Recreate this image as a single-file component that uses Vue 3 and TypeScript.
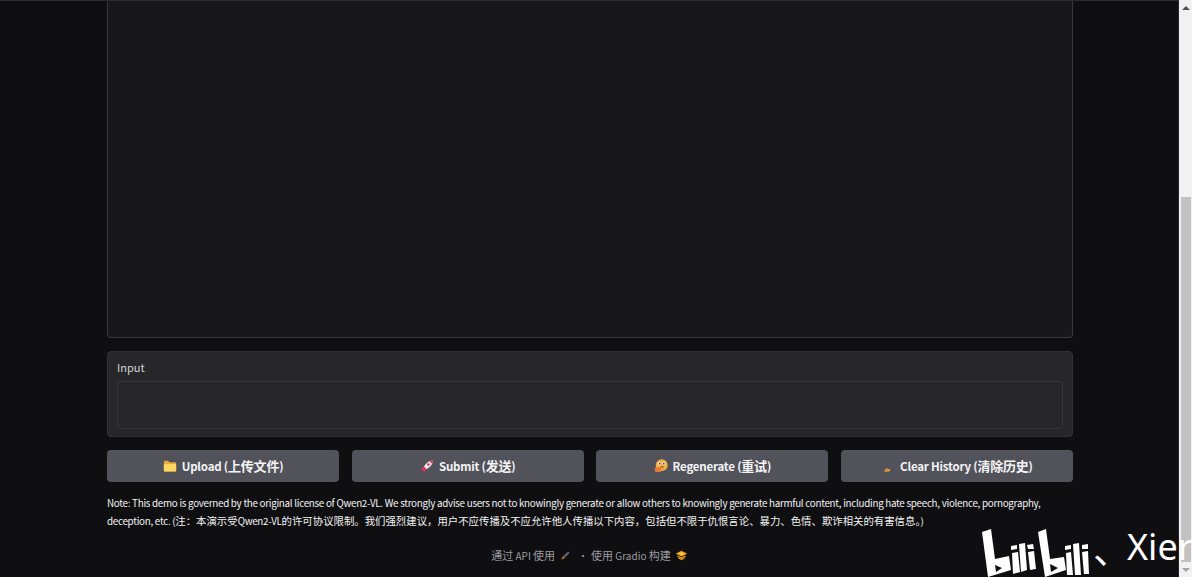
<template>
  <div class="page">
    <main class="main">
      <div class="container">
        <div class="chatbot"></div>
        <div class="input-block">
          <label class="input-label" for="query">Input</label>
          <textarea id="query" class="input-box" rows="2"></textarea>
        </div>
        <div class="btn-row">
          <button v-for="b in buttons" :key="b.en" class="btn" type="button">
            <svg v-if="b.icon === 'folder'" class="btn-icon" viewBox="0 0 16 16">
              <path d="M1 3.500C1 2.700 1.600 2 2.400 2h3.400l1.600 1.800h6.200c.8 0 1.400.6 1.400 1.400V13c0 .8-.6 1.400-1.400 1.400H2.400C1.600 14.400 1 13.800 1 13z" fill="#e8a93a" />
              <path d="M1 5.600h14V13c0 .8-.6 1.400-1.400 1.400H2.400C1.600 14.400 1 13.800 1 13z" fill="#fdd663" />
            </svg>
            <svg v-else-if="b.icon === 'rocket'" class="btn-icon" viewBox="0 0 16 16">
              <path d="M1 11 5 8l3 3-3 4-1-1.800-1.200 1-.8-.8 1-1.200z" fill="#d9365e" />
              <path d="M4.600 8.600C6.600 4.800 9.600 2 15 1 14.400 6.400 11.200 9.400 7.400 11.400z" fill="#f0e9ee" />
              <path d="M10.600 2.300C12 1.700 13.400 1.300 15 1c-.2 1.600-.6 3-1.200 4.300z" fill="#d9365e" />
              <circle cx="9.600" cy="6.400" r="1.500" fill="#c9455f" />
            </svg>
            <svg v-else-if="b.icon === 'think'" class="btn-icon" viewBox="0 0 16 16">
              <circle cx="8.800" cy="7" r="6.800" fill="#f4b042" />
              <circle cx="6.400" cy="5.200" r="1.800" fill="#fff" />
              <circle cx="11.400" cy="5.200" r="1.800" fill="#fff" />
              <circle cx="6.600" cy="5.300" r="1" fill="#4a3520" />
              <circle cx="11.200" cy="5.300" r="1" fill="#4a3520" />
              <path d="M7 9.600c1.300-.8 2.900-.8 4.300 0" stroke="#8a4b20" stroke-width="1.200" fill="none" />
              <path d="M.8 11.500c0-1.800 1.600-2.500 3-2l4.200 1.200c1.400.4 1.200 1.800 0 1.800H6.600l1.200 1c.6.7-.1 1.700-1 1.400H3c-1.400 0-2.200-1.200-2.200-2.400z" fill="#e8793a" />
            </svg>
            <svg v-else class="btn-icon" viewBox="0 0 16 16">
              <path d="M3.500 14.500c.2-1.800 1.500-3.700 3.400-4.300l3 2.300c-.8 1.200-1.600 1.800-2.600 2z" fill="#e8893a" />
              <path d="M7.800 14.500c1.200-.3 2.400-1 3-2.100l-.9-.8-1.400 1.300z" fill="#f6c04a" />
              <path d="M9.500 10.500 14 6" stroke="#5f5f68" stroke-width="1" />
            </svg>
            <span class="btn-text">{{ b.en }} (<span class="btn-zh">{{ b.zh }}</span>)</span>
          </button>
        </div>
        <p class="note">Note: This demo is governed by the original license of Qwen2-VL. We strongly advise users not to knowingly generate or allow others to knowingly generate harmful content, including hate speech, violence, pornography, deception, etc. (<span class="zh">注：本演示受</span>Qwen2-VL<span class="zh">的许可协议限制。我们强烈建议，用户不应传播及不应允许他人传播以下内容，包括但不限于仇恨言论、暴力、色情、欺诈相关的有害信息。</span>)</p>
      </div>
      <footer class="footer">
        <span><span class="foot-zh">通过</span> API <span class="foot-zh">使用</span></span>
        <svg class="foot-icon" viewBox="0 0 12 12">
          <path d="M1.500 10.500 3.500 6.500 5.500 8.500z" fill="#f08a24" />
          <path d="M4 6 8 2.500 10.500 1.500 9.500 4 6 8z" fill="#5d6480" />
        </svg>
        <span class="dot">·</span>
        <span><span class="foot-zh">使用</span> Gradio <span class="foot-zh">构建</span></span>
        <svg class="foot-icon" viewBox="0 0 12 12">
          <path d="M6 1.500 11 4 6 6.500 1 4z" fill="#f9c74f" stroke="#f59e0b" stroke-width="1.200" />
          <path d="M1.500 6.500 6 8.800 10.500 6.500" fill="none" stroke="#f59e0b" stroke-width="1.200" />
          <path d="M2.500 8.500 6 10.400 9.500 8.500" fill="none" stroke="#f59e0b" stroke-width="1.200" />
        </svg>
      </footer>
    </main>
    <div class="scrollbar">
      <div class="arrow up"></div>
      <div class="track"><div class="thumb"></div></div>
      <div class="arrow down"></div>
    </div>
    <div class="watermark">
      <svg class="bili" viewBox="0 0 118 55" fill="#fff">
        <path d="M7 10 16 7 20 37 34 34 36 48 13 55z" />
        <path d="M20 43 27 46 21 50z" fill="#0f0f11" />
        <path d="M36 24 42 23 42 27 36 28zM37 31 43 30 45 50 38 52zM44 22 50 21 52 48 46 50zM52 23 58 22 59 27 53 27zM53 30 59 29 61 47 55 48z" />
        <path d="M63 10 71 7 75 37 89 35 91 48 70 55z" />
        <path d="M75 42 83 46 76 50z" fill="#0f0f11" />
        <path d="M90 24 96 23 96 27 90 28zM91 31 96 30 98 53 92 53zM98 22 104 21 106 53 100 53zM107 23 113 22 113 27 107 27zM107 30 113 29 114 52 109 52z" />
      </svg>
      <span class="wm-mark">、</span>
      <span class="wm-text">Xier</span>
    </div>
  </div>
</template>

<script setup lang="ts">
const buttons = [
  { icon: 'folder', en: 'Upload', zh: '上传文件' },
  { icon: 'rocket', en: 'Submit', zh: '发送' },
  { icon: 'think', en: 'Regenerate', zh: '重试' },
  { icon: 'broom', en: 'Clear History', zh: '清除历史' },
]
</script>

<style>
html,
body {
  margin: 0;
  overflow: hidden;
  background: #0f0f11;
}
</style>

<style scoped>
.page {
  position: relative;
  display: flex;
  width: 1192px;
  height: 577px;
  overflow: hidden;
  font-family: "Noto Sans CJK SC", "Noto Sans", sans-serif;
  background: #0f0f11;
}

.main {
  flex: 1;
  display: flex;
  flex-direction: column;
  align-items: center;
  padding-left: 2px;
  border-top: 1px solid #2b2b2e;
  border-right: 1px solid #26262a;
}

.container {
  width: 966px;
  display: flex;
  flex-direction: column;
}

.chatbot {
  height: 337px;
  box-sizing: border-box;
  background: #18181b;
  border: 1px solid #38383c;
  border-top: none;
  border-radius: 0 0 4px 4px;
}

.input-block {
  margin-top: 13px;
  height: 86px;
  box-sizing: border-box;
  padding: 8px 9px 7px;
  display: flex;
  flex-direction: column;
  background: #27272a;
  border: 1px solid #323236;
  border-radius: 4px;
}

.input-label {
  font-size: 11px;
  line-height: 15px;
  color: #d4d4d8;
}

.input-box {
  flex: 1;
  margin-top: 6px;
  padding: 0;
  resize: none;
  outline: none;
  background: #27272a;
  border: 1px solid #37373b;
  border-radius: 4px;
}

.btn-row {
  margin-top: 13px;
  display: grid;
  grid-template-columns: repeat(4, 1fr);
  gap: 12.500px;
}

.btn {
  height: 32px;
  padding: 0 0 2px;
  display: flex;
  align-items: center;
  justify-content: center;
  gap: 5px;
  border: none;
  border-radius: 4px;
  background: #52525b;
  color: #f4f4f5;
  font-family: inherit;
  font-size: 11.500px;
  font-weight: 600;
  letter-spacing: -0.2px;
}

.btn-icon {
  width: 14px;
  height: 14px;
  flex: none;
  margin-top: 2px;
}

.btn-zh {
  font-size: 13px;
  font-weight: 700;
}

.note {
  margin: 13px 0 0;
  font-size: 9.800px;
  line-height: 17px;
  letter-spacing: -0.27px;
  color: #f4f4f5;
}

.zh {
  font-size: 10.400px;
  letter-spacing: 0;
}

.footer {
  margin-top: 17px;
  margin-right: 2px;
  display: flex;
  align-items: center;
  gap: 5px;
  font-size: 10px;
  line-height: 17px;
  color: #9a9aa2;
}

.foot-zh {
  font-size: 11px;
}

.foot-icon {
  width: 11px;
  height: 11px;
}

.dot {
  margin: 0 -2px 0 2px;
}

.scrollbar {
  width: 13px;
  flex: none;
  display: flex;
  flex-direction: column;
  background: #f1f1f1;
}

.track {
  flex: 1;
  display: flex;
  flex-direction: column;
  justify-content: flex-end;
}

.thumb {
  height: 365px;
  margin: 0 1px 0 2px;
  background: #c1c1c1;
}

.arrow {
  height: 15px;
  flex: none;
  display: flex;
  align-items: center;
  justify-content: center;
}

.arrow::before {
  content: "";
  border-left: 4px solid transparent;
  border-right: 4px solid transparent;
}

.up::before {
  border-bottom: 4px solid #505050;
}

.down::before {
  border-top: 4px solid #a3a3a3;
}

.watermark {
  position: absolute;
  left: 975px;
  top: 522px;
  height: 55px;
  display: flex;
  pointer-events: none;
  white-space: nowrap;
  color: #fff;
}

.bili {
  width: 118px;
  height: 55px;
  flex: none;
}

.wm-mark {
  font-family: "Noto Sans CJK SC", sans-serif;
  font-size: 38px;
  line-height: 38px;
  margin-top: 6px;
  width: 34px;
  flex: none;
}

.wm-text {
  font-family: "Noto Sans", sans-serif;
  font-size: 36px;
  line-height: 49px;
}
</style>
